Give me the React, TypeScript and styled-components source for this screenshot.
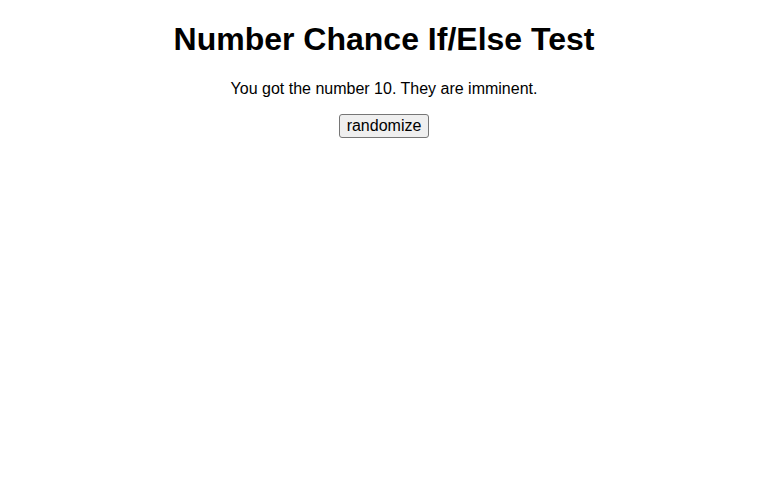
import { FC, useState } from "react";
import styled, { createGlobalStyle } from "styled-components";

const GlobalStyle = createGlobalStyle`
  body {
    margin: 0;
    padding: 0 8px;
    background: #ffffff;
    font-family: "Liberation Sans", Arial, sans-serif;
    color: #000000;
  }
`;

const Page = styled.div`
  text-align: center;
`;

const Title = styled.h1`
  font-size: 32px;
  font-weight: 700;
  margin: 21.44px 0;
`;

const Message = styled.p`
  font-size: 16px;
  margin: 16px 0;
`;

const RandomButton = styled.button`
  font-family: "Liberation Sans", Arial, sans-serif;
  font-size: 16px;
  color: #000000;
  background: #efefef;
  border: 1px solid #767676;
  border-radius: 3px;
  padding: 2px 7px;
  cursor: pointer;

  &:hover {
    background: #e5e5e5;
  }
`;

const describe = (n: number) => (n >= 10 ? "They are imminent." : "They are far away.");

const App: FC = () => {
  const [num, setNum] = useState(10);

  return (
    <>
      <GlobalStyle />
      <Page>
        <Title>Number Chance If/Else Test</Title>
        <Message>
          You got the number {num}. {describe(num)}
        </Message>
        <RandomButton onClick={() => setNum(Math.floor(Math.random() * 20) + 1)}>
          randomize
        </RandomButton>
      </Page>
    </>
  );
};

export default App;
